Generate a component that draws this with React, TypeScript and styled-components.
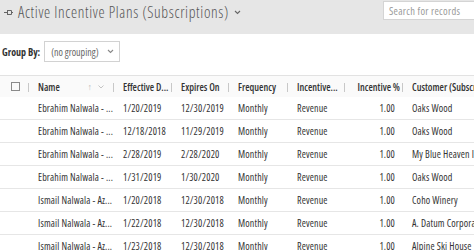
import React from "react";
import styled, { createGlobalStyle } from "styled-components";

const Global = createGlobalStyle`
  html, body { margin: 0; padding: 0; background: #fff; }
  body { width: 474px; height: 250px; overflow: hidden; font-family: "Open Sans", "Noto Sans", sans-serif; font-stretch: 75%; }
  * { box-sizing: border-box; }
`;

const Page = styled.div`
  width: 474px;
  display: flex;
  flex-direction: column;
`;

const TopBar = styled.div`
  height: 34px;
  background: #e6e6e6;
  display: flex;
  align-items: flex-start;
  justify-content: space-between;
`;

const TitleWrap = styled.div`
  display: flex;
  align-items: center;
  gap: 5px;
  padding: 1px 0 0 4px;
`;

const Title = styled.span`
  font-size: 15.5px;
  font-weight: 300;
  letter-spacing: 0.65px;
  color: #555;
`;

const Search = styled.div`
  margin-top: 1px;
  width: 91px;
  height: 19px;
  background: #fff;
  border: 1px solid #d4d4d4;
  border-right: none;
  font-size: 10.5px;
  letter-spacing: 0.3px;
  color: #9a9a9a;
  padding: 2px 0 0 5px;
  white-space: nowrap;
`;

const GroupRow = styled.div`
  display: flex;
  align-items: center;
  gap: 4px;
  height: 41px;
  padding: 0 0 6px 2px;
`;

const GroupLabel = styled.span`
  font-size: 10px;
  font-weight: 700;
  color: #333;
`;

const Dropdown = styled.div`
  width: 76px;
  height: 21px;
  border: 1px solid #d2d2d2;
  display: flex;
  align-items: center;
  justify-content: space-between;
  padding: 0 5px 0 6px;
  font-size: 10px;
  color: #666;
  white-space: nowrap;
`;

const Grid = styled.div`
  display: grid;
  grid-template-columns: 29px 85px 58px 57px 59px 57px 58px 1fr;
  width: 474px;
`;

const HeadCell = styled.div<{ $right?: boolean; $sep?: boolean }>`
  position: relative;
  height: 22px;
  border-top: 1px solid #e2e2e2;
  background: #fafafa;
  display: flex;
  align-items: center;
  justify-content: ${(p) => (p.$right ? "flex-end" : "space-between")};
  padding: ${(p) => (p.$right ? "0 3px 0 8px" : "0 0 0 9px")};
  font-size: 10px;
  font-weight: 600;
  color: #333;
  white-space: nowrap;
  overflow: hidden;
  &::after {
    content: "";
    display: ${(p) => (p.$sep ? "block" : "none")};
    position: absolute;
    right: 0;
    top: 7px;
    width: 1px;
    height: 9px;
    background: #c8c8c8;
  }
`;

const Cell = styled.div<{ $right?: boolean }>`
  height: 23px;
  border-bottom: 1px solid #e6e6e6;
  display: flex;
  align-items: center;
  justify-content: ${(p) => (p.$right ? "flex-end" : "flex-start")};
  padding: ${(p) => (p.$right ? "0 8px 0 0" : "0 0 0 9px")};
  font-size: 10px;
  letter-spacing: 0.15px;
  color: #333;
  white-space: nowrap;
  overflow: hidden;
`;

const Check = styled.span`
  width: 9px;
  height: 9px;
  border: 1px solid #8a8a8a;
  margin-left: 2px;
`;

const Sort = styled.span`
  display: flex;
  align-items: center;
  gap: 6px;
  margin-right: 10px;
  color: #bdbdbd;
  font-size: 9px;
  font-weight: 400;
`;

const rows = [
  ["Ebrahim Nalwala - ...", "1/20/2019", "12/30/2019", "Oaks Wood"],
  ["Ebrahim Nalwala - ...", "12/18/2018", "11/29/2019", "Oaks Wood"],
  ["Ebrahim Nalwala - ...", "2/28/2019", "2/28/2020", "My Blue Heaven Ii"],
  ["Ebrahim Nalwala - ...", "1/31/2019", "1/30/2020", "Oaks Wood"],
  ["Ismail Nalwala - Az...", "1/20/2018", "12/30/2018", "Coho Winery"],
  ["Ismail Nalwala - Az...", "1/22/2018", "12/30/2018", "A. Datum Corporation"],
  ["Ismail Nalwala - Az...", "1/23/2018", "12/30/2018", "Alpine Ski House"],
];

const PinIcon = () => (
  <svg width="9" height="7" viewBox="0 0 9 7" fill="none" stroke="#666" strokeWidth="1">
    <path d="M0 3.5H3M3.5 1V6M3.5 1.5H7.5V5.5H3.5M7.5 3.5H9" />
  </svg>
);

const Chevron = ({ color = "#666" }: { color?: string }) => (
  <svg width="7" height="5" viewBox="0 0 7 5" fill="none" stroke={color} strokeWidth="1.1">
    <path d="M1 1L3.5 3.5L6 1" />
  </svg>
);

const SortDown = () => (
  <svg width="6" height="4" viewBox="0 0 6 4" fill="none" stroke="#c4c4c4" strokeWidth="1">
    <path d="M0.5 0.5L3 3L5.5 0.5" />
  </svg>
);

export default function App() {
  return (
    <Page>
      <Global />
      <TopBar>
        <TitleWrap>
          <PinIcon />
          <Title>Active Incentive Plans (Subscriptions)</Title>
          <Chevron />
        </TitleWrap>
        <Search>Search for records</Search>
      </TopBar>
      <GroupRow>
        <GroupLabel>Group By:</GroupLabel>
        <Dropdown>
          <span>(no grouping)</span>
          <Chevron color="#888" />
        </Dropdown>
      </GroupRow>
      <Grid>
        <HeadCell $sep>
          <Check />
        </HeadCell>
        <HeadCell $sep>
          <span>Name</span>
          <Sort>
            <span>↑</span>
            <SortDown />
          </Sort>
        </HeadCell>
        <HeadCell $sep>Effective D...</HeadCell>
        <HeadCell $sep>Expires On</HeadCell>
        <HeadCell $sep>Frequency</HeadCell>
        <HeadCell $sep>Incentive...</HeadCell>
        <HeadCell $sep $right>Incentive %</HeadCell>
        <HeadCell>Customer (Subscription)</HeadCell>
        {rows.map((r, i) => (
          <React.Fragment key={i}>
            <Cell />
            <Cell>{r[0]}</Cell>
            <Cell>{r[1]}</Cell>
            <Cell>{r[2]}</Cell>
            <Cell>Monthly</Cell>
            <Cell>Revenue</Cell>
            <Cell $right>1.00</Cell>
            <Cell>{r[3]}</Cell>
          </React.Fragment>
        ))}
      </Grid>
    </Page>
  );
}
